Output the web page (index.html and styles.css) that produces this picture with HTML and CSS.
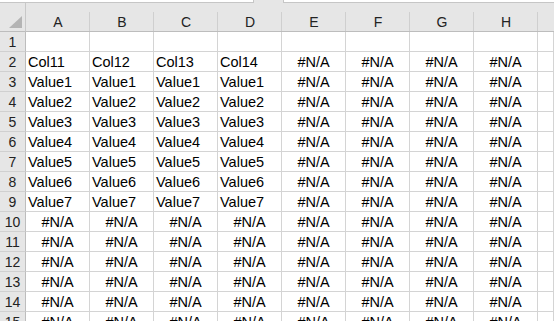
FILE: index.html
```html
<!DOCTYPE html>
<html>
<head>
<meta charset="utf-8">
<link rel="stylesheet" href="styles.css">
</head>
<body>
<div class="topbar"><div class="box box-left"></div><div class="gap"></div><div class="box box-right"></div></div>
<div class="sheet">
  <div class="corner"><svg width="13" height="12" viewBox="0 0 13 12"><polygon points="13,0 13,12 0,12" fill="#b4b4b4"/></svg></div>
  <div class="ch">A</div><div class="ch">B</div><div class="ch">C</div><div class="ch">D</div><div class="ch">E</div><div class="ch">F</div><div class="ch">G</div><div class="ch">H</div><div class="ch ch-last"></div>

  <div class="rh">1</div><div class="c"></div><div class="c"></div><div class="c"></div><div class="c"></div><div class="c"></div><div class="c"></div><div class="c"></div><div class="c"></div><div class="c"></div>

  <div class="rh">2</div><div class="c t">Col11</div><div class="c t">Col12</div><div class="c t">Col13</div><div class="c t">Col14</div><div class="c n">#N/A</div><div class="c n">#N/A</div><div class="c n">#N/A</div><div class="c n">#N/A</div><div class="c"></div>

  <div class="rh">3</div><div class="c t">Value1</div><div class="c t">Value1</div><div class="c t">Value1</div><div class="c t">Value1</div><div class="c n">#N/A</div><div class="c n">#N/A</div><div class="c n">#N/A</div><div class="c n">#N/A</div><div class="c"></div>

  <div class="rh">4</div><div class="c t">Value2</div><div class="c t">Value2</div><div class="c t">Value2</div><div class="c t">Value2</div><div class="c n">#N/A</div><div class="c n">#N/A</div><div class="c n">#N/A</div><div class="c n">#N/A</div><div class="c"></div>

  <div class="rh">5</div><div class="c t">Value3</div><div class="c t">Value3</div><div class="c t">Value3</div><div class="c t">Value3</div><div class="c n">#N/A</div><div class="c n">#N/A</div><div class="c n">#N/A</div><div class="c n">#N/A</div><div class="c"></div>

  <div class="rh">6</div><div class="c t">Value4</div><div class="c t">Value4</div><div class="c t">Value4</div><div class="c t">Value4</div><div class="c n">#N/A</div><div class="c n">#N/A</div><div class="c n">#N/A</div><div class="c n">#N/A</div><div class="c"></div>

  <div class="rh">7</div><div class="c t">Value5</div><div class="c t">Value5</div><div class="c t">Value5</div><div class="c t">Value5</div><div class="c n">#N/A</div><div class="c n">#N/A</div><div class="c n">#N/A</div><div class="c n">#N/A</div><div class="c"></div>

  <div class="rh">8</div><div class="c t">Value6</div><div class="c t">Value6</div><div class="c t">Value6</div><div class="c t">Value6</div><div class="c n">#N/A</div><div class="c n">#N/A</div><div class="c n">#N/A</div><div class="c n">#N/A</div><div class="c"></div>

  <div class="rh">9</div><div class="c t">Value7</div><div class="c t">Value7</div><div class="c t">Value7</div><div class="c t">Value7</div><div class="c n">#N/A</div><div class="c n">#N/A</div><div class="c n">#N/A</div><div class="c n">#N/A</div><div class="c"></div>

  <div class="rh">10</div><div class="c n">#N/A</div><div class="c n">#N/A</div><div class="c n">#N/A</div><div class="c n">#N/A</div><div class="c n">#N/A</div><div class="c n">#N/A</div><div class="c n">#N/A</div><div class="c n">#N/A</div><div class="c"></div>

  <div class="rh">11</div><div class="c n">#N/A</div><div class="c n">#N/A</div><div class="c n">#N/A</div><div class="c n">#N/A</div><div class="c n">#N/A</div><div class="c n">#N/A</div><div class="c n">#N/A</div><div class="c n">#N/A</div><div class="c"></div>

  <div class="rh">12</div><div class="c n">#N/A</div><div class="c n">#N/A</div><div class="c n">#N/A</div><div class="c n">#N/A</div><div class="c n">#N/A</div><div class="c n">#N/A</div><div class="c n">#N/A</div><div class="c n">#N/A</div><div class="c"></div>

  <div class="rh">13</div><div class="c n">#N/A</div><div class="c n">#N/A</div><div class="c n">#N/A</div><div class="c n">#N/A</div><div class="c n">#N/A</div><div class="c n">#N/A</div><div class="c n">#N/A</div><div class="c n">#N/A</div><div class="c"></div>

  <div class="rh">14</div><div class="c n">#N/A</div><div class="c n">#N/A</div><div class="c n">#N/A</div><div class="c n">#N/A</div><div class="c n">#N/A</div><div class="c n">#N/A</div><div class="c n">#N/A</div><div class="c n">#N/A</div><div class="c"></div>

  <div class="rh">15</div><div class="c n">#N/A</div><div class="c n">#N/A</div><div class="c n">#N/A</div><div class="c n">#N/A</div><div class="c n">#N/A</div><div class="c n">#N/A</div><div class="c n">#N/A</div><div class="c n">#N/A</div><div class="c"></div>
</div>
</body>
</html>
```

FILE: styles.css
```css
* { box-sizing: border-box; }
html, body {
  margin: 0;
  padding: 0;
  width: 554px;
  height: 321px;
  overflow: hidden;
  background: #e6e6e6;
  font-family: "Liberation Sans", Arial, sans-serif;
  font-size: 14.5px;
  color: #000;
}
.topbar {
  display: flex;
  height: 3px;
  background: #e6e6e6;
}
.box {
  background: #fff;
  border-bottom: 1px solid #c6c6c6;
}
.box-left { width: 254px; border-right: 1px solid #c6c6c6; }
.gap { width: 29px; }
.box-right { flex: 1; border-left: 1px solid #c6c6c6; }

.sheet {
  display: grid;
  grid-template-columns: 26px repeat(8, 64px) 1fr;
  grid-template-rows: 29px repeat(15, 20px);
}
.corner {
  background: #e6e6e6;
  border-right: 1px solid #c8c8c8;
  border-bottom: 1px solid #bdbdbd;
  display: flex;
  align-items: flex-end;
  justify-content: flex-end;
  padding: 0 3px 3px 0;
}
.corner svg { display: block; }
.ch {
  background: #e6e6e6 linear-gradient(#cfcfcf, #cfcfcf) right bottom / 1px 19px no-repeat;
  border-bottom: 1px solid #bdbdbd;
  display: flex;
  align-items: center;
  justify-content: center;
  padding-top: 9px;
  color: #222;
  font-size: 14px;
}
.ch-last { background: #e6e6e6; }
.rh {
  background: #e6e6e6;
  border-right: 1px solid #bdbdbd;
  border-bottom: 1px solid #d0d0d0;
  display: flex;
  align-items: center;
  justify-content: center;
  color: #222;
  font-size: 14px;
}
.c {
  background: #fff;
  border-right: 1px solid #d4d4d4;
  border-bottom: 1px solid #d4d4d4;
  display: flex;
  align-items: center;
  white-space: nowrap;
  overflow: hidden;
}
.t { justify-content: flex-start; padding-left: 2px; }
.n { justify-content: center; }
```
